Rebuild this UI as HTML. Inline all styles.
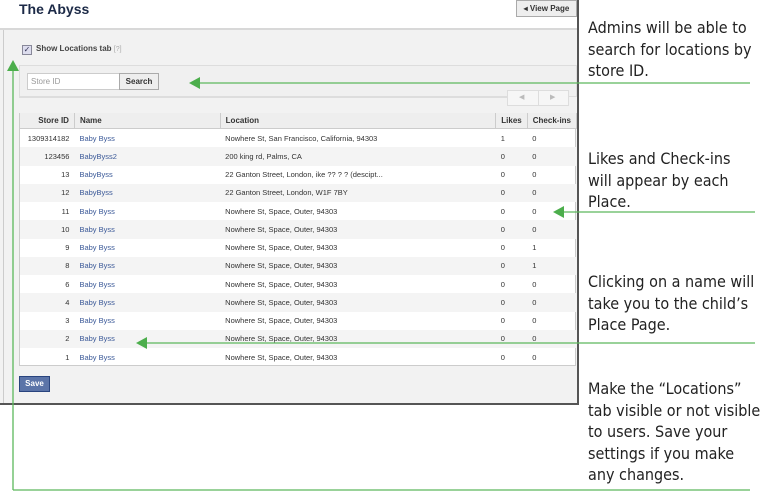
<!DOCTYPE html>
<html><head><style>
body{margin:0;width:768px;height:502px;background:#fff;position:relative;overflow:hidden;font-family:"Liberation Sans",Tahoma,sans-serif;}
.abs{position:absolute}
.panel{left:0;top:0;width:578px;height:404px;background:#f2f2f2;}
.hdr{left:0;top:0;width:578px;height:28px;background:#fff;border-bottom:2px solid #d8d8d8;}
.title{left:19px;top:1px;font-size:14px;font-weight:bold;color:#1c2a47;}
.vp{left:516px;top:0;width:59px;height:15px;border:1px solid #aaa;background:#eee;font-size:8px;font-weight:bold;color:#333;line-height:15px;text-align:center}
.note{left:588px;font-size:16px;line-height:21.5px;color:#222;font-family:"DejaVu Sans Condensed","Liberation Sans",sans-serif;}
table{border-collapse:collapse;font-size:7.5px;color:#333;}
td,th{height:18.25px;padding:0 5px;white-space:nowrap}
th{height:15px;text-align:left;background:#eee;border:1px solid #ccc;border-top:none;font-weight:bold;color:#333;font-size:8px}
tr:nth-child(odd) td{background:#f4f4f4}
td a{color:#3b5998}
</style></head><body>
<div class="abs panel"></div>
<div class="abs" style="left:3px;top:0;width:1px;height:404px;background:#ccc"></div>
<div class="abs hdr"></div>
<div class="abs title">The Abyss</div>
<div class="abs vp">◂ View Page</div>
<div class="abs" style="left:577px;top:0;width:2px;height:405px;background:#555"></div>
<div class="abs" style="left:0;top:403px;width:579px;height:2px;background:#555"></div>

<div class="abs" style="left:22px;top:45px;width:8px;height:8px;border:1px solid #889;background:#dde;font-size:8px;line-height:8px;color:#335;text-align:center">✓</div>
<div class="abs" style="left:36px;top:44px;font-size:8px;font-weight:bold;color:#444">Show Locations tab <span style="font-weight:normal;color:#aaa;font-size:7px">[?]</span></div>

<div class="abs" style="left:19px;top:65px;width:556px;height:30px;border:1px solid #ddd;background:#f0f0f0"></div>
<div class="abs" style="left:27px;top:73px;font-size:8px;color:#999;line-height:15px;padding-left:3px;box-sizing:border-box;width:93px;height:17px;border:1px solid #ccc;background:#fff">Store ID</div>
<div class="abs" style="left:119px;top:73px;width:38px;height:15px;border:1px solid #aaa;background:#eee;font-size:8px;font-weight:bold;color:#333;text-align:center;line-height:15px">Search</div>
<div class="abs" style="left:19px;top:97px;width:488px;height:1px;background:#ddd"></div>
<div class="abs" style="left:507px;top:90px;width:60px;height:14px;border:1px solid #ddd;background:#f6f6f6;font-size:7px;color:#bbb;line-height:14px"><span style="position:absolute;left:11px">◀</span><span style="position:absolute;left:30px;top:0;width:1px;height:14px;background:#ddd"></span><span style="position:absolute;left:42px">▶</span></div>

<div class="abs" style="left:19px;top:113px;width:557px;height:253px;background:#fff;border:1px solid #ccc;box-sizing:border-box"></div>
<table class="abs" style="left:19px;top:113px;width:558px">
<tr><th style="width:44px;text-align:right">Store ID</th><th style="width:136px">Name</th><th style="width:266px">Location</th><th style="width:19px">Likes</th><th>Check-ins</th></tr>
<tr><td style="text-align:right">1309314182</td><td><a>Baby Byss</a></td><td>Nowhere St, San Francisco, California, 94303</td><td>1</td><td>0</td></tr>
<tr><td style="text-align:right">123456</td><td><a>BabyByss2</a></td><td>200 king rd, Palms, CA</td><td>0</td><td>0</td></tr>
<tr><td style="text-align:right">13</td><td><a>BabyByss</a></td><td>22 Ganton Street, London, ike ?? ? ? (descipt...</td><td>0</td><td>0</td></tr>
<tr><td style="text-align:right">12</td><td><a>BabyByss</a></td><td>22 Ganton Street, London, W1F 7BY</td><td>0</td><td>0</td></tr>
<tr><td style="text-align:right">11</td><td><a>Baby Byss</a></td><td>Nowhere St, Space, Outer, 94303</td><td>0</td><td>0</td></tr>
<tr><td style="text-align:right">10</td><td><a>Baby Byss</a></td><td>Nowhere St, Space, Outer, 94303</td><td>0</td><td>0</td></tr>
<tr><td style="text-align:right">9</td><td><a>Baby Byss</a></td><td>Nowhere St, Space, Outer, 94303</td><td>0</td><td>1</td></tr>
<tr><td style="text-align:right">8</td><td><a>Baby Byss</a></td><td>Nowhere St, Space, Outer, 94303</td><td>0</td><td>1</td></tr>
<tr><td style="text-align:right">6</td><td><a>Baby Byss</a></td><td>Nowhere St, Space, Outer, 94303</td><td>0</td><td>0</td></tr>
<tr><td style="text-align:right">4</td><td><a>Baby Byss</a></td><td>Nowhere St, Space, Outer, 94303</td><td>0</td><td>0</td></tr>
<tr><td style="text-align:right">3</td><td><a>Baby Byss</a></td><td>Nowhere St, Space, Outer, 94303</td><td>0</td><td>0</td></tr>
<tr><td style="text-align:right">2</td><td><a>Baby Byss</a></td><td>Nowhere St, Space, Outer, 94303</td><td>0</td><td>0</td></tr>
<tr><td style="text-align:right">1</td><td><a>Baby Byss</a></td><td>Nowhere St, Space, Outer, 94303</td><td>0</td><td>0</td></tr>
</table>
<div class="abs" style="left:19px;top:376px;width:31px;height:16px;background:#5b74a8;border:1px solid #29447e;box-sizing:border-box;color:#fff;font-size:8px;font-weight:bold;text-align:center;line-height:14px">Save</div>

<div class="abs note" style="top:17px">Admins will be able to<br>search for locations by<br>store ID.</div>
<div class="abs note" style="top:148px">Likes and Check-ins<br>will appear by each<br>Place.</div>
<div class="abs note" style="top:271px">Clicking on a name will<br>take you to the child’s<br>Place Page.</div>
<div class="abs note" style="top:378px">Make the “Locations”<br>tab visible or not visible<br>to users. Save your<br>settings if you make<br>any changes.</div>

<svg class="abs" style="left:0;top:0" width="768" height="502">
<g stroke="#5cb85c" stroke-width="1.3" fill="none">
<line x1="13" y1="70" x2="13" y2="490"/><line x1="13" y1="490" x2="750" y2="490"/>
<line x1="198" y1="83" x2="750" y2="83"/>
<line x1="562" y1="212" x2="755" y2="212"/>
<line x1="144" y1="343" x2="755" y2="343"/>
</g>
<g fill="#4cae4c">
<polygon points="13,60 7,71 19,71"/>
<polygon points="189,83 200,77 200,89"/>
<polygon points="553,212 564,206 564,218"/>
<polygon points="136,343 147,337 147,349"/>
</g>
</svg>
</body></html>
